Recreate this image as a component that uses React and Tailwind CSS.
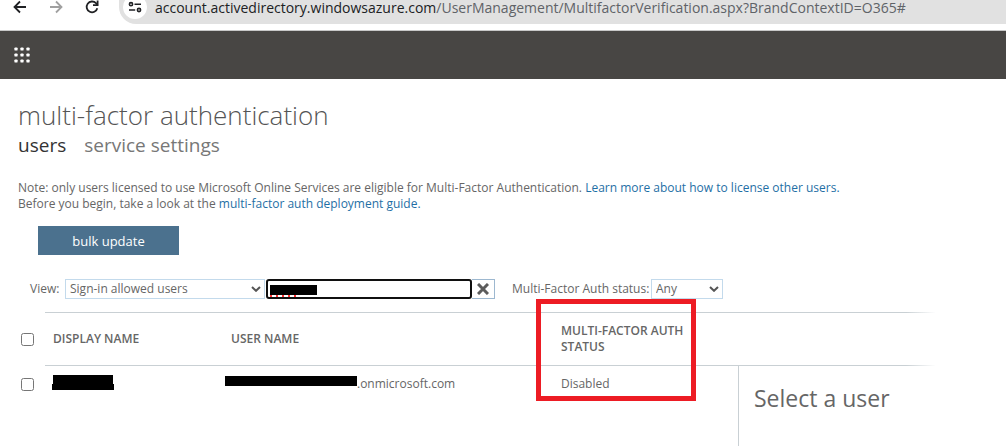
import { clsx } from 'clsx'

function ArrowIcon({ flip, className }) {
  return (
    <svg viewBox="0 0 14 14" className={clsx('h-3.5 w-3.5', flip && 'rotate-180', className)} fill="none" stroke="currentColor" strokeWidth="1.8">
      <path d="M13 7H2M7 1.5 1.5 7 7 12.5" />
    </svg>
  )
}

function ReloadIcon() {
  return (
    <svg viewBox="0 0 14 14" className="h-3.5 w-3.5" fill="none" stroke="currentColor" strokeWidth="1.8">
      <path d="M12.3 8.2A5.4 5.4 0 1 1 11 3.2L12.6 4.8" />
      <path d="M12.6 .6V5.2H8" />
    </svg>
  )
}

function SiteInfoIcon() {
  return (
    <svg viewBox="0 0 24 20" className="h-5 w-6" fill="none" stroke="#202124" strokeWidth="1.6">
      <circle cx="12" cy="7" r="12" fill="#fff" stroke="none" />
      <circle cx="8" cy="4.2" r="1.6" />
      <path d="M11.5 4.2H18M6 10H12.2" />
      <circle cx="16" cy="10" r="1.6" />
    </svg>
  )
}

function Waffle() {
  const steps = [2, 8, 14]
  return (
    <svg viewBox="0 0 16 16" className="h-4 w-4" fill="#fff">
      {steps.map((y) => steps.map((x) => <rect key={`${x}-${y}`} x={x - 1.6} y={y - 1.6} width="3.2" height="3.2" rx="0.9" />))}
    </svg>
  )
}

function Select({ id, className, children }) {
  return (
    <span className={clsx('relative inline-flex', className)}>
      <select id={id} className="h-5 w-full appearance-none border border-[#c3daec] bg-white pl-1 text-xs leading-4 text-[#666]">
        {children}
      </select>
      <svg viewBox="0 0 10 6" className="pointer-events-none absolute top-[7px] right-1 h-1.5 w-2.5" fill="none" stroke="#555" strokeWidth="2">
        <path d="M1 1 5 4.8 9 1" />
      </svg>
    </span>
  )
}

function BrowserBar() {
  return (
    <div className="flex h-[31px] items-start border-b border-[#c8c8c8] bg-white text-[#202124]">
      <button aria-label="Back" className="ml-[13px]">
        <ArrowIcon />
      </button>
      <button aria-label="Forward" className="ml-[22px] text-[#a0a0a0]">
        <ArrowIcon flip />
      </button>
      <button aria-label="Reload" className="ml-[22px]">
        <ReloadIcon />
      </button>
      <div className="ml-5 flex h-6 flex-1 items-start rounded-bl-[17px] bg-[#e1e1e1] pl-1">
        <button aria-label="View site information">
          <SiteInfoIcon />
        </button>
        <span className="ml-2 text-sm leading-4 whitespace-nowrap text-[#5f6368]">
          <span className="text-[#202124]">account.activedirectory.windowsazure.com</span>
          /UserManagement/MultifactorVerification.aspx?BrandContextID=O365#
        </span>
      </div>
    </div>
  )
}

function Toolbar() {
  return (
    <div className="mt-6 flex h-5 items-center pl-[30px] whitespace-nowrap">
      <label htmlFor="view" className="w-[35px]">View:</label>
      <Select id="view" className="w-[200px]">
        <option>Sign-in allowed users</option>
      </Select>
      <div className="relative ml-px">
        <input aria-label="Search users" className="block h-5 w-[206px] rounded-[3px] border-2 border-[#101010] bg-white px-1 outline-none" />
        <span className="absolute top-4 left-1 h-0.5 w-7 bg-[repeating-linear-gradient(90deg,#f33_0_2px,transparent_2px_6px)]" />
        <span className="absolute top-1.5 left-1 h-2.5 w-[47px] bg-black" />
      </div>
      <button aria-label="Clear search" className="flex h-5 w-[23px] items-center justify-center border border-l-0 border-[#9db8d0]">
        <svg viewBox="0 0 12 12" className="h-3 w-3" fill="none" stroke="#5c5c5c" strokeWidth="3">
          <path d="M1 1 11 11M11 1 1 11" />
        </svg>
      </button>
      <label htmlFor="status" className="ml-[17px] w-[139px]">Multi-Factor Auth status:</label>
      <Select id="status" className="w-[72px]">
        <option>Any</option>
      </Select>
    </div>
  )
}

function Checkbox({ label }) {
  return <input type="checkbox" aria-label={label} className="ml-[21px] block h-[13px] w-[13px]" />
}

const headCell = 'h-[54px] border-y border-[#c9d0d4] pl-2 text-left font-semibold'

function UsersTable() {
  return (
    <div className="relative mt-[13px]">
      <table className="w-full max-w-[935px] table-fixed border-separate border-spacing-0">
        <colgroup>
          <col className="w-[45px]" />
          <col className="w-[178px]" />
          <col className="w-[330px]" />
          <col className="w-[185px]" />
          <col />
        </colgroup>
        <thead>
          <tr>
            <th><Checkbox label="Select all users" /></th>
            <th className={headCell}>DISPLAY NAME</th>
            <th className={headCell}>USER NAME</th>
            <th className={clsx(headCell, 'pr-[50px]')}>MULTI-FACTOR AUTH STATUS</th>
            <td className="border-y [border-image:linear-gradient(to_right,#c9d0d4_85%,transparent)_1]" />
          </tr>
        </thead>
        <tbody>
          <tr className="align-top">
            <td className="pt-3"><Checkbox label="Select user" /></td>
            <td className="pt-[9px] pl-[7px]">
              <div className="ml-px h-[9px] w-[60px] bg-black" />
              <div className="h-1.5 w-[62px] bg-black" />
            </td>
            <td className="pt-2.5 pl-0.5">
              <div className="flex">
                <span className="h-2.5 w-[132px] bg-black" />
                <span>.onmicrosoft.com</span>
              </div>
            </td>
            <td className="pt-2.5 pl-2">Disabled</td>
            <td className="h-20 border-l border-[#c9d0d4] pt-4 pl-[15px]">
              <h2 className="text-[23px] leading-8">Select a user</h2>
            </td>
          </tr>
        </tbody>
      </table>
      <div className="pointer-events-none absolute -top-[13px] left-[536px] h-[102px] w-40 border-5 border-[#ed1c24]" />
    </div>
  )
}

export default function App() {
  return (
    <div className="overflow-hidden bg-white font-['Open_Sans','Noto_Sans',sans-serif] text-xs leading-4 text-[#666]">
      <BrowserBar />
      <header className="flex h-12 items-center bg-[#484644] pl-3.5">
        <button aria-label="App launcher">
          <Waffle />
        </button>
      </header>
      <main className="pt-5">
        <div className="px-[18px]">
          <h1 className="text-[26px] leading-8 font-light text-[#555]">multi-factor authentication</h1>
          <nav className="flex gap-[18px] text-[19px] leading-7">
            <a href="#users" className="text-[#333]">users</a>
            <a href="#settings" className="text-[#777]">service settings</a>
          </nav>
          <p className="mt-[21px]">
            Note: only users licensed to use Microsoft Online Services are eligible for Multi-Factor Authentication.{' '}
            <a href="#license" className="text-[#1f6fa5]">Learn more about how to license other users.</a>
            <br />
            Before you begin, take a look at the <a href="#guide" className="text-[#1f6fa5]">multi-factor auth deployment guide.</a>
          </p>
          <button className="mt-3.5 ml-5 block h-[29px] w-[141px] bg-[#4b718e] text-[13px] text-white">bulk update</button>
        </div>
        <Toolbar />
        <UsersTable />
      </main>
    </div>
  )
}
